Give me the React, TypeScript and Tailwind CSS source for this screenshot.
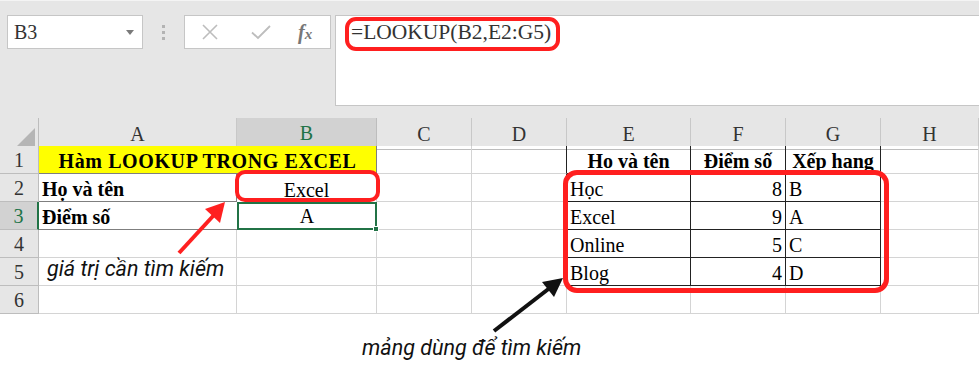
import React from 'react';

const serif = "font-['Liberation_Serif','Times_New_Roman',serif]";
const gridCols = 'grid grid-cols-[39px_198px_140px_95px_95px_124px_95px_95px_98px]';

type Cell = {
  text?: string;
  cls?: string;
  span?: boolean;
};

const base = 'h-[28px] flex items-end px-[3px] leading-[24px] whitespace-nowrap';
const plain = 'border-r border-b border-[#d4d4d4]';
const dark = 'border-r border-b border-[#222]';
const darkRight = 'border-r border-b border-r-[#222] border-b-[#d4d4d4]';

const rows: Cell[][] = [
  [
    { text: 'Hàm LOOKUP TRONG EXCEL', span: true, cls: `bg-[#ffff00] font-bold justify-center tracking-[0.6px] border-r border-b border-[#7f7f7f]` },
    { cls: plain },
    { cls: darkRight },
    { text: 'Ho và tên', cls: `font-bold justify-center ${dark}` },
    { text: 'Điểm số', cls: `font-bold justify-center ${dark}` },
    { text: 'Xếp hang', cls: `font-bold justify-center ${dark}` },
    { cls: plain },
  ],
  [
    { text: 'Họ và tên', cls: 'font-bold border-r border-b border-[#7f7f7f]' },
    { text: 'Excel', cls: 'justify-center border-r border-r-[#d4d4d4]' },
    { cls: plain },
    { cls: darkRight },
    { text: 'Học', cls: dark },
    { text: '8', cls: `justify-end ${dark}` },
    { text: 'B', cls: dark },
    { cls: plain },
  ],
  [
    { text: 'Điểm số', cls: 'font-bold border-b border-[#7f7f7f]' },
    { text: 'A', cls: 'justify-center border-2 border-[#217346] leading-[22px] relative' },
    { cls: plain },
    { cls: darkRight },
    { text: 'Excel', cls: dark },
    { text: '9', cls: `justify-end ${dark}` },
    { text: 'A', cls: dark },
    { cls: plain },
  ],
  [
    { cls: plain },
    { cls: 'border-r border-[#d4d4d4] border-b' },
    { cls: plain },
    { cls: darkRight },
    { text: 'Online', cls: dark },
    { text: '5', cls: `justify-end ${dark}` },
    { text: 'C', cls: dark },
    { cls: plain },
  ],
  [
    { cls: plain },
    { cls: plain },
    { cls: plain },
    { cls: darkRight },
    { text: 'Blog', cls: dark },
    { text: '4', cls: `justify-end ${dark}` },
    { text: 'D', cls: dark },
    { cls: plain },
  ],
  [
    { cls: plain }, { cls: plain }, { cls: plain }, { cls: plain },
    { cls: plain }, { cls: plain }, { cls: plain }, { cls: plain },
  ],
];

const colLetters = ['A', 'B', 'C', 'D', 'E', 'F', 'G', 'H'];

function Toolbar() {
  return (
    <div className="h-[118px] bg-[#e6e6e6] border-t border-[#f4f4f4] flex items-start pt-[14px]">
      {/* name box */}
      <div className={`ml-[7px] w-[136px] h-[34px] bg-white border border-[#c6c6c6] flex items-center justify-between pl-[6px] pr-[8px] text-[20px] text-[#333] ${serif}`}>
        <span>B3</span>
        <svg width="8" height="5" viewBox="0 0 8 5"><path d="M0 0h8L4 5z" fill="#7a7a7a" /></svg>
      </div>
      <div className="w-[41px] h-[34px] flex flex-col items-center justify-center gap-[3px]">
        <div className="w-[3px] h-[3px] bg-[#b3b3b3]" />
        <div className="w-[3px] h-[3px] bg-[#b3b3b3]" />
        <div className="w-[3px] h-[3px] bg-[#b3b3b3]" />
      </div>
      {/* cancel / enter / fx */}
      <div className="w-[147px] h-[34px] bg-white border border-[#c6c6c6] flex items-center">
        <svg className="ml-[16px]" width="18" height="18" viewBox="0 0 18 18">
          <path d="M2 2L16 16M16 2L2 16" stroke="#bdbdbd" strokeWidth="1.6" />
        </svg>
        <svg className="ml-[32px]" width="20" height="16" viewBox="0 0 20 16">
          <path d="M1 8.5L7 14L19 2" stroke="#bdbdbd" strokeWidth="1.8" fill="none" />
        </svg>
        <span className={`ml-[27px] text-[20px] italic font-bold text-[#777] ${serif}`}>
          f<span className="text-[15px]">x</span>
        </span>
      </div>
      <div className="ml-[4px] flex-1 h-[91px] bg-white border border-[#c6c6c6] border-r-0 pl-[15px] pt-[1px]">
        <span className={`text-[21.5px] leading-[30px] text-[#333] ${serif}`}>=LOOKUP(B2,E2:G5)</span>
      </div>
    </div>
  );
}

function Sheet() {
  return (
    <div className={`${serif} text-[20px] text-black`}>
      {/* column headers */}
      <div className={`${gridCols} h-[28px] bg-[#e6e6e6]`}>
        <div className="border-r border-b border-[#bdbdbd] flex items-end justify-end pr-[3px] pb-[3px]">
          <svg width="18" height="18" viewBox="0 0 18 18"><path d="M18 0V18H0z" fill="#b5b5b5" /></svg>
        </div>
        {colLetters.map(c => (
          <div
            key={c}
            className={
              c === 'B'
                ? 'bg-[#d2d2d2] border-r border-r-[#bdbdbd] border-b-2 border-b-[#217346] flex items-center justify-center text-[#217346]'
                : 'border-r border-b border-r-[#c8c8c8] border-b-[#bdbdbd] flex items-center justify-center text-[#333]'
            }
          >
            {c}
          </div>
        ))}
      </div>
      {rows.map((row, i) => (
        <div key={i} className={`${gridCols} bg-white`}>
          <div
            className={
              i === 2
                ? 'h-[28px] bg-[#d2d2d2] border-r-2 border-r-[#217346] border-b border-b-[#bdbdbd] flex items-center justify-center text-[#217346]'
                : 'h-[28px] bg-[#e6e6e6] border-r border-b border-[#bdbdbd] flex items-center justify-center text-[#333]'
            }
          >
            {i + 1}
          </div>
          {row.map((cell, j) => (
            <div key={j} className={`${base} ${cell.span ? 'col-span-2' : ''} ${cell.cls ?? ''}`}>
              {cell.text}
              {i === 2 && j === 1 && (
                <div className="absolute right-[-4px] bottom-[-4px] w-[6px] h-[6px] bg-[#217346] border border-white" />
              )}
            </div>
          ))}
        </div>
      ))}
    </div>
  );
}

function Notes() {
  return (
    <>
      <div className="absolute left-[345px] top-[17px] w-[215px] h-[34px] border-[4px] border-[#ff1f1f] rounded-[11px]" />
      <div className="absolute left-[235px] top-[170px] w-[145px] h-[32px] border-[4px] border-[#ff1f1f] rounded-[10px]" />
      <div className="absolute left-[563px] top-[170px] w-[326px] h-[123px] border-[5px] border-[#ff1f1f] rounded-[14px]" />
      <svg className="absolute left-0 top-0 pointer-events-none" width="979" height="370">
        <line x1="179" y1="253" x2="214" y2="215" stroke="#ff2020" strokeWidth="4" />
        <path d="M225 202L220 223L205 209z" fill="#ff2020" />
        <line x1="494" y1="331" x2="551" y2="287" stroke="#111" strokeWidth="4" />
        <path d="M563 278L554 297L542 282z" fill="#111" />
      </svg>
      <div className="absolute left-[47px] top-[253px] text-[21.5px] italic text-[#111] font-['Roboto',sans-serif]">
        giá trị cần tìm kiếm
      </div>
      <div className="absolute left-[362px] top-[332px] text-[21.5px] italic text-[#111] font-['Roboto',sans-serif]">
        mảng dùng để tìm kiếm
      </div>
    </>
  );
}

export default function App() {
  return (
    <div className="relative w-[979px] h-[370px] bg-white overflow-hidden">
      <Toolbar />
      <Sheet />
      <Notes />
    </div>
  );
}
